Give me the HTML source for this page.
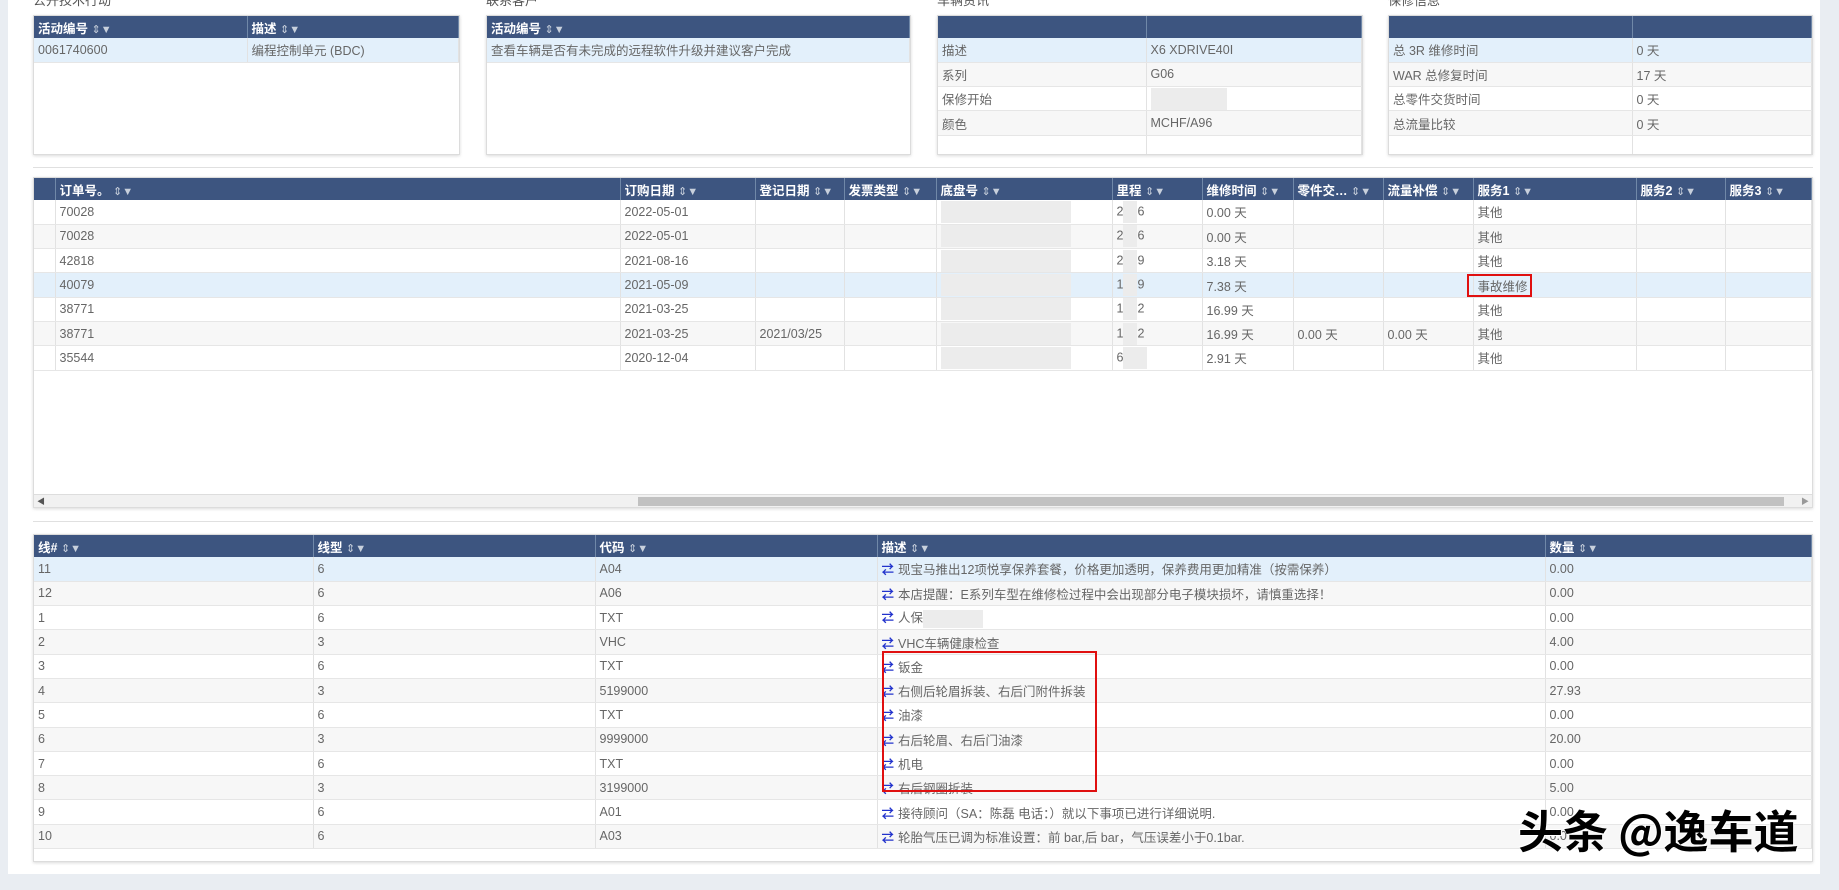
<!DOCTYPE html>
<html><head><meta charset="utf-8">
<style>
*{margin:0;padding:0;box-sizing:border-box}
body{width:1839px;height:890px;background:#e9edf2;position:relative;overflow:hidden;font-family:"Liberation Sans","Noto Sans CJK SC",sans-serif;font-size:12.5px;color:#666}
.white{position:absolute;left:8px;top:0;width:1812px;height:874px;background:#fff}
.box{position:absolute;background:#fff;border:1px solid #dcdcdc;box-shadow:0 1px 3px rgba(0,0,0,.15);overflow:hidden}
table{border-collapse:collapse;table-layout:fixed;width:100%}
th{background:#3d5580;color:#fff;text-align:left;font-weight:bold;height:22px;padding:0 4px;border-right:1px solid #7088a8;white-space:nowrap;overflow:hidden;font-size:12.5px}
td{height:24.3px;padding:0 4px;border-right:1px solid #e2e2e2;border-bottom:1px solid #e6e6e6;white-space:nowrap;overflow:hidden}
tr.a td{background:#f7f7f7}
tr.h td{background:#e3f0fb}
.si{font-weight:normal;color:#c8d0dc;font-size:11px}
.title{position:absolute;top:-10px;font-size:13px;color:#555}
.sep{position:absolute;left:33px;width:1780px;height:1px;background:#e0e0e0}
.blur{display:inline-block;background:#ececec;height:22px;vertical-align:middle}
.ic{color:#2233cc;font-weight:bold;margin-right:4px}
.red{position:absolute;border:2px solid #e01010}
</style></head><body>
<div class="white"></div>
<div class="title" style="left:33px">公开技术行动</div>
<div class="title" style="left:486px">联系客户</div>
<div class="title" style="left:937px">车辆资讯</div>
<div class="title" style="left:1388px">保修信息</div>

<div class="box" style="left:33px;top:15px;width:427px;height:140px"><table>
<colgroup><col style="width:213px"><col></colgroup>
<tr><th>活动编号 <span class="si">⇕▼</span></th><th>描述 <span class="si">⇕▼</span></th></tr>
<tr class="h"><td>0061740600</td><td>编程控制单元 (BDC)</td></tr></table></div>

<div class="box" style="left:486px;top:15px;width:425px;height:140px"><table>
<tr><th>活动编号 <span class="si">⇕▼</span></th></tr>
<tr class="h"><td>查看车辆是否有未完成的远程软件升级并建议客户完成</td></tr></table></div>

<div class="box" style="left:937px;top:15px;width:426px;height:140px"><table>
<colgroup><col style="width:208px"><col></colgroup>
<tr><th></th><th></th></tr>
<tr class="h"><td>描述</td><td>X6 XDRIVE40I</td></tr>
<tr class="a"><td>系列</td><td>G06</td></tr>
<tr><td>保修开始</td><td><span class="blur" style="width:76px"></span></td></tr>
<tr class="a"><td>颜色</td><td>MCHF/A96</td></tr>
<tr><td></td><td></td></tr></table></div>

<div class="box" style="left:1388px;top:15px;width:425px;height:140px"><table>
<colgroup><col style="width:243px"><col></colgroup>
<tr><th></th><th></th></tr>
<tr class="h"><td>总 3R 维修时间</td><td>0 天</td></tr>
<tr class="a"><td>WAR 总修复时间</td><td>17 天</td></tr>
<tr><td>总零件交货时间</td><td>0 天</td></tr>
<tr class="a"><td>总流量比较</td><td>0 天</td></tr>
<tr><td></td><td></td></tr></table></div>

<div class="sep" style="top:167px"></div>

<div class="box" style="left:33px;top:177px;width:1780px;height:331px"><table>
<colgroup><col style="width:21px"><col style="width:565px"><col style="width:135px"><col style="width:89px"><col style="width:92px"><col style="width:176px"><col style="width:90px"><col style="width:91px"><col style="width:90px"><col style="width:90px"><col style="width:163px"><col style="width:89px"><col></colgroup>
<tr><th></th><th>订单号。 <span class="si">⇕▼</span></th><th>订购日期 <span class="si">⇕▼</span></th><th>登记日期 <span class="si">⇕▼</span></th><th>发票类型 <span class="si">⇕▼</span></th><th>底盘号 <span class="si">⇕▼</span></th><th>里程 <span class="si">⇕▼</span></th><th>维修时间 <span class="si">⇕▼</span></th><th>零件交… <span class="si">⇕▼</span></th><th>流量补偿 <span class="si">⇕▼</span></th><th>服务1 <span class="si">⇕▼</span></th><th>服务2 <span class="si">⇕▼</span></th><th>服务3 <span class="si">⇕▼</span></th></tr>
<tr><td></td><td>70028</td><td>2022-05-01</td><td></td><td></td><td><span class="blur" style="width:130px"></span></td><td>2<span class="blur" style="width:14px"></span>6</td><td>0.00 天</td><td></td><td></td><td>其他</td><td></td><td></td></tr>
<tr class="a"><td></td><td>70028</td><td>2022-05-01</td><td></td><td></td><td><span class="blur" style="width:130px"></span></td><td>2<span class="blur" style="width:14px"></span>6</td><td>0.00 天</td><td></td><td></td><td>其他</td><td></td><td></td></tr>
<tr><td></td><td>42818</td><td>2021-08-16</td><td></td><td></td><td><span class="blur" style="width:130px"></span></td><td>2<span class="blur" style="width:14px"></span>9</td><td>3.18 天</td><td></td><td></td><td>其他</td><td></td><td></td></tr>
<tr class="h"><td></td><td>40079</td><td>2021-05-09</td><td></td><td></td><td><span class="blur" style="width:130px"></span></td><td>1<span class="blur" style="width:14px"></span>9</td><td>7.38 天</td><td></td><td></td><td>事故维修</td><td></td><td></td></tr>
<tr><td></td><td>38771</td><td>2021-03-25</td><td></td><td></td><td><span class="blur" style="width:130px"></span></td><td>1<span class="blur" style="width:14px"></span>2</td><td>16.99 天</td><td></td><td></td><td>其他</td><td></td><td></td></tr>
<tr class="a"><td></td><td>38771</td><td>2021-03-25</td><td>2021/03/25</td><td></td><td><span class="blur" style="width:130px"></span></td><td>1<span class="blur" style="width:14px"></span>2</td><td>16.99 天</td><td>0.00 天</td><td>0.00 天</td><td>其他</td><td></td><td></td></tr>
<tr><td></td><td>35544</td><td>2020-12-04</td><td></td><td></td><td><span class="blur" style="width:130px"></span></td><td>6<span class="blur" style="width:24px"></span></td><td>2.91 天</td><td></td><td></td><td>其他</td><td></td><td></td></tr>
</table>
<div style="position:absolute;left:0;top:316px;width:1778px;height:14px;background:#f1f1f1;border-top:1px solid #ddd"><span style="position:absolute;left:3px;top:1px;font-size:8px;color:#555">◀</span><div style="position:absolute;left:604px;top:2px;width:1146px;height:9px;background:#c1c1c1"></div><span style="position:absolute;right:3px;top:1px;font-size:8px;color:#999">▶</span></div>
</div>
<div class="red" style="left:1467px;top:274px;width:65px;height:23px"></div>

<div class="sep" style="top:521px"></div>

<div class="box" style="left:33px;top:534px;width:1780px;height:328px"><table>
<colgroup><col style="width:279px"><col style="width:282px"><col style="width:282px"><col style="width:668px"><col></colgroup>
<tr><th>线# <span class="si">⇕▼</span></th><th>线型 <span class="si">⇕▼</span></th><th>代码 <span class="si">⇕▼</span></th><th>描述 <span class="si">⇕▼</span></th><th>数量 <span class="si">⇕▼</span></th></tr>
<tr class="h"><td>11</td><td>6</td><td>A04</td><td><span class="ic">⇄</span>现宝马推出12项悦享保养套餐，价格更加透明，保养费用更加精准（按需保养）</td><td>0.00</td></tr>
<tr class="a"><td>12</td><td>6</td><td>A06</td><td><span class="ic">⇄</span>本店提醒：E系列车型在维修检过程中会出现部分电子模块损坏，请慎重选择！</td><td>0.00</td></tr>
<tr><td>1</td><td>6</td><td>TXT</td><td><span class="ic">⇄</span>人保<span class="blur" style="width:60px;height:18px"></span></td><td>0.00</td></tr>
<tr class="a"><td>2</td><td>3</td><td>VHC</td><td><span class="ic">⇄</span>VHC车辆健康检查</td><td>4.00</td></tr>
<tr><td>3</td><td>6</td><td>TXT</td><td><span class="ic">⇄</span>钣金</td><td>0.00</td></tr>
<tr class="a"><td>4</td><td>3</td><td>5199000</td><td><span class="ic">⇄</span>右侧后轮眉拆装、右后门附件拆装</td><td>27.93</td></tr>
<tr><td>5</td><td>6</td><td>TXT</td><td><span class="ic">⇄</span>油漆</td><td>0.00</td></tr>
<tr class="a"><td>6</td><td>3</td><td>9999000</td><td><span class="ic">⇄</span>右后轮眉、右后门油漆</td><td>20.00</td></tr>
<tr><td>7</td><td>6</td><td>TXT</td><td><span class="ic">⇄</span>机电</td><td>0.00</td></tr>
<tr class="a"><td>8</td><td>3</td><td>3199000</td><td><span class="ic">⇄</span>右后钢圈拆装</td><td>5.00</td></tr>
<tr><td>9</td><td>6</td><td>A01</td><td><span class="ic">⇄</span>接待顾问（SA：陈磊 电话：）就以下事项已进行详细说明.</td><td>0.00</td></tr>
<tr class="a"><td>10</td><td>6</td><td>A03</td><td><span class="ic">⇄</span>轮胎气压已调为标准设置：前 bar,后 bar，气压误差小于0.1bar.</td><td>0.0</td></tr>
</table></div>
<div class="red" style="left:882px;top:651px;width:215px;height:141px"></div>
<div style="position:absolute;left:1518px;top:806px;font-size:45px;font-weight:bold;color:#000;font-family:'Noto Sans CJK SC','Liberation Sans',sans-serif;text-shadow:1px 1px 0 #fff,-1px -1px 0 #fff;line-height:1">头条 @逸车道</div>
</body></html>
